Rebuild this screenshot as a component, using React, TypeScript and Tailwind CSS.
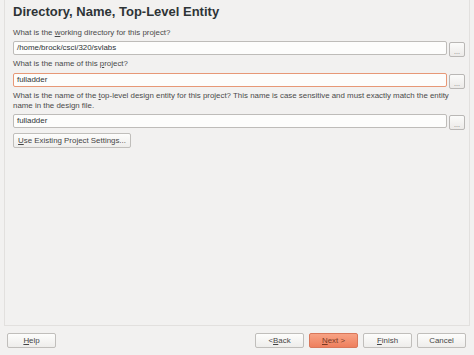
import React from "react";

const font = { fontFamily: '"Liberation Sans", Arial, sans-serif' };

function Dots() {
  return (
    <div className="w-[16px] h-[15px] ml-[2px] mt-[1px] shrink-0 rounded-[2px] border border-[#b9b7b5] bg-gradient-to-b from-[#fbfbfa] to-[#eceae8] flex items-end justify-center text-[7px] leading-[9px] text-[#777]">
      ...
    </div>
  );
}

function Field({ value, focused }: { value: string; focused?: boolean }) {
  return (
    <div className="flex items-start h-[14px]">
      <div
        className={
          "w-[434px] h-[14px] shrink-0 rounded-[2px] border bg-[#fdfdfc] flex items-center px-[3px] text-[7.9px] text-[#2e3436] " +
          (focused ? "border-[#e79877]" : "border-[#bebcb9]")
        }
      >
        {value}
      </div>
      <Dots />
    </div>
  );
}

function Btn({ children, primary }: { children: React.ReactNode; primary?: boolean }) {
  return (
    <div
      className={
        "w-[49px] h-[15px] rounded-[2px] border flex items-center justify-center text-[7.9px] " +
        (primary
          ? "border-[#d9775a] bg-gradient-to-b from-[#f7a284] to-[#ee7f5d] text-[#7a3a24]"
          : "border-[#c0bebb] bg-gradient-to-b from-[#fdfdfc] to-[#eeedeb] text-[#454545]")
      }
    >
      {children}
    </div>
  );
}

export default function App() {
  return (
    <div className="w-[474px] h-[355px] bg-[#f2f1f0] flex flex-col" style={font}>
      <div className="mx-[4px] h-[326px] border-x border-b border-[#e2e0de] flex flex-col pl-[8px]">
        <div className="text-[13px] font-bold text-[#2e3436] mt-[4px] leading-[16px]">
          Directory, Name, Top-Level Entity
        </div>
        <div className="text-[7.9px] text-[#4a4a4a] mt-[8px] leading-[10px]">
          What is the <u>w</u>orking directory for this project?
        </div>
        <div className="mt-[3px]">
          <Field value="/home/brock/csci/320/svlabs" />
        </div>
        <div className="text-[7.9px] text-[#4a4a4a] mt-[4px] leading-[10px]">
          What is the name of this <u>p</u>roject?
        </div>
        <div className="mt-[4px]">
          <Field value="fulladder" focused />
        </div>
        <div className="text-[7.9px] text-[#4a4a4a] mt-[4px] leading-[10px] w-[452px] whitespace-nowrap">
          What is the name of the <u>t</u>op-level design entity for this project? This name is case sensitive and must exactly match the entity
          <br />
          name in the design file.
        </div>
        <div className="mt-[3px]">
          <Field value="fulladder" />
        </div>
        <div className="mt-[5px] w-[118px] h-[15px] rounded-[2px] border border-[#c0bebb] bg-gradient-to-b from-[#fdfdfc] to-[#eeedeb] flex items-center justify-center text-[7.9px] text-[#454545]">
          <span><u>U</u>se Existing Project Settings...</span>
        </div>
      </div>
      <div className="flex items-center mt-[7px] px-[7px]">
        <Btn><u>H</u>elp</Btn>
        <div className="flex-1" />
        <div className="flex gap-[5px] mr-[1px]">
          <Btn>&lt; <u>B</u>ack</Btn>
          <Btn primary><u>N</u>ext &gt;</Btn>
          <Btn><u>F</u>inish</Btn>
          <Btn>Cancel</Btn>
        </div>
      </div>
    </div>
  );
}
